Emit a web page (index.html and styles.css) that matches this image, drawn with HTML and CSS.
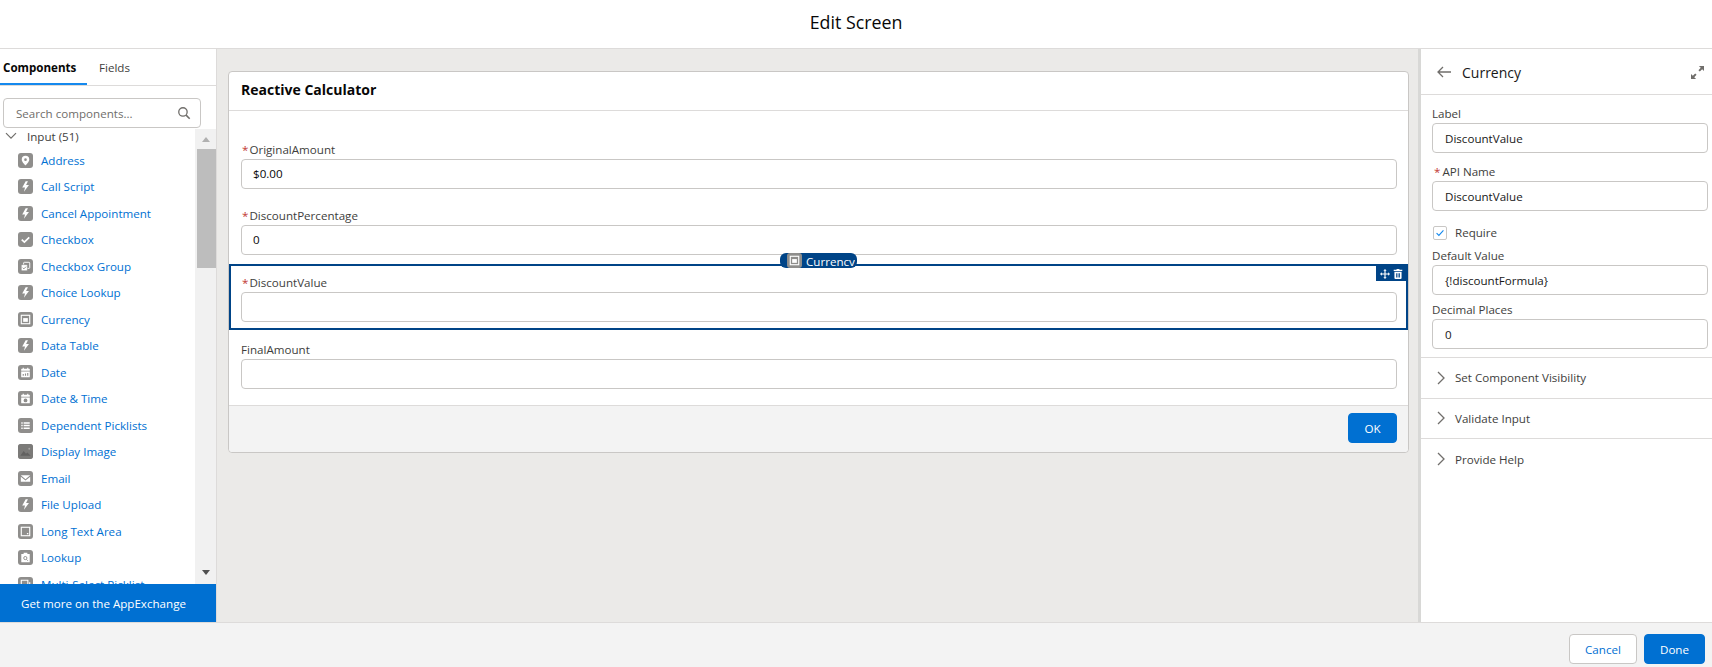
FILE: index.html
```html
<!DOCTYPE html>
<html lang="en">
<head>
<meta charset="utf-8">
<title>Edit Screen</title>
<link rel="stylesheet" href="styles.css">
</head>
<body>
<svg class="defs" width="0" height="0" aria-hidden="true">
  <symbol id="i-pin" viewBox="0 0 16 16"><path fill="#fff" fill-rule="evenodd" d="M8 3a4 4 0 0 0-4 4c0 2.600 3 5.400 4 6.200 1-.8 4-3.600 4-6.200a4 4 0 0 0-4-4zm0 2.700a1.400 1.400 0 1 1 0 2.800 1.400 1.400 0 0 1 0-2.800z"/></symbol>
  <symbol id="i-bolt" viewBox="0 0 16 16"><path fill="#fff" d="M8.200 2.500 4.500 9h3L6.300 13.700 11.700 6.500H8.600L10.600 2.500z"/></symbol>
  <symbol id="i-check" viewBox="0 0 16 16"><path fill="none" stroke="#fff" stroke-width="1.800" d="M4 8.200l2.800 2.600L12 5.700"/></symbol>
  <symbol id="i-group" viewBox="0 0 16 16"><rect x="6" y="3.500" width="6.500" height="6.500" rx=".8" fill="none" stroke="#fff"/><rect x="3.500" y="6" width="6.500" height="6.500" rx=".8" fill="#fff" stroke="#8f8e8c" stroke-width=".6"/><path fill="none" stroke="#8f8e8c" d="M5 9.300l1.300 1.200 2.200-2.300"/></symbol>
  <symbol id="i-cur" viewBox="0 0 16 16"><rect x="3.500" y="3.500" width="9" height="9" fill="none" stroke="#fff" stroke-width="1.200"/><rect x="5.500" y="6.500" width="5" height="4" fill="#fff"/></symbol>
  <symbol id="i-date" viewBox="0 0 16 16"><path fill="#fff" d="M4 4h8a.6.6 0 0 1 .6.600V6H3.400V4.600A.6.6 0 0 1 4 4zM5 3h1.200v1.500H5zM9.800 3H11v1.500H9.800zM3.400 6.800h9.200v5.600a.6.6 0 0 1-.6.600H4a.6.6 0 0 1-.6-.6z"/><path fill="#8f8e8c" d="M5 9.500h1.200v2H5zM7.400 9h1.200v2.500H7.400zM9.800 8.500H11v3H9.800z"/></symbol>
  <symbol id="i-time" viewBox="0 0 16 16"><path fill="#fff" d="M4 4h8a.6.6 0 0 1 .6.600V6H3.400V4.600A.6.6 0 0 1 4 4zM5 3h1.200v1.500H5zM9.800 3H11v1.500H9.800zM3.400 6.800h9.200v5.600a.6.6 0 0 1-.6.600H4a.6.6 0 0 1-.6-.6z"/><circle cx="8" cy="10" r="2" fill="#8f8e8c"/></symbol>
  <symbol id="i-list" viewBox="0 0 16 16"><path fill="#fff" d="M3.500 4.500h1.500V6H3.500zM6 4.500h6.500V6H6zM3.500 7.300h1.500v1.500H3.500zM6 7.300h6.500v1.500H6zM3.500 10.100h1.500v1.500H3.500zM6 10.100h6.500v1.500H6z"/></symbol>
  <symbol id="i-img" viewBox="0 0 16 16"><rect width="16" height="16" fill="#7b7a78"/><path fill="#626160" d="M2.500 12.500l3.500-5 2.500 3 1.500-1.500 3.500 3.500z"/><circle cx="12" cy="5" r="1" fill="#a8a7a5"/></symbol>
  <symbol id="i-mail" viewBox="0 0 16 16"><path fill="#fff" d="M3 4.500h10L8 8.700zM3 6l5 4.200L13 6v5.500H3z"/></symbol>
  <symbol id="i-long" viewBox="0 0 16 16"><rect x="3.500" y="3.500" width="9" height="9" fill="none" stroke="#fff" stroke-width="1.200"/><path fill="#fff" d="M9.500 9.500h1.500v1.500H9.500z"/></symbol>
  <symbol id="i-look" viewBox="0 0 16 16"><path fill="#fff" d="M6 2.800h4v1.400h2.500V13h-9V4.200H6z"/><circle cx="7.800" cy="8.600" r="1.700" fill="none" stroke="#8f8e8c"/><path stroke="#8f8e8c" d="M9 10l1.500 1.500"/></symbol>
  <symbol id="i-drop" viewBox="0 0 16 16"><path fill="none" stroke="#fff" stroke-width="1.200" d="M3.500 3.500h7v7h-7zM5.500 12.500h7v-7"/></symbol>
</svg>

<div class="app">
  <header class="top">Edit Screen</header>
  <div class="main">
    <aside class="left">
      <nav class="tabs">
        <span class="tab tab-on">Components</span>
        <span class="tab">Fields</span>
      </nav>
      <div class="search">
        <span class="search-text">Search components...</span>
        <svg class="search-ico" viewBox="0 0 16 16"><circle cx="6.800" cy="6.800" r="4.800" fill="none" stroke="#706e6b" stroke-width="1.500"/><path d="M10.400 10.400L14.500 14.500" stroke="#706e6b" stroke-width="1.800"/></svg>
      </div>
      <div class="lib">
        <div class="lib-list">
          <div class="group-head">
            <svg class="group-chev" viewBox="0 0 12 8"><path d="M1 1.200l5 5 5-5" fill="none" stroke="#706e6b" stroke-width="1.200"/></svg>
            <span>Input (51)</span>
          </div>
          <div class="item"><svg class="ico"><use href="#i-pin"/></svg><a>Address</a></div>
          <div class="item"><svg class="ico"><use href="#i-bolt"/></svg><a>Call Script</a></div>
          <div class="item"><svg class="ico"><use href="#i-bolt"/></svg><a>Cancel Appointment</a></div>
          <div class="item"><svg class="ico"><use href="#i-check"/></svg><a>Checkbox</a></div>
          <div class="item"><svg class="ico"><use href="#i-group"/></svg><a>Checkbox Group</a></div>
          <div class="item"><svg class="ico"><use href="#i-bolt"/></svg><a>Choice Lookup</a></div>
          <div class="item"><svg class="ico"><use href="#i-cur"/></svg><a>Currency</a></div>
          <div class="item"><svg class="ico"><use href="#i-bolt"/></svg><a>Data Table</a></div>
          <div class="item"><svg class="ico"><use href="#i-date"/></svg><a>Date</a></div>
          <div class="item"><svg class="ico"><use href="#i-time"/></svg><a>Date &amp; Time</a></div>
          <div class="item"><svg class="ico"><use href="#i-list"/></svg><a>Dependent Picklists</a></div>
          <div class="item"><svg class="ico"><use href="#i-img"/></svg><a>Display Image</a></div>
          <div class="item"><svg class="ico"><use href="#i-mail"/></svg><a>Email</a></div>
          <div class="item"><svg class="ico"><use href="#i-bolt"/></svg><a>File Upload</a></div>
          <div class="item"><svg class="ico"><use href="#i-long"/></svg><a>Long Text Area</a></div>
          <div class="item"><svg class="ico"><use href="#i-look"/></svg><a>Lookup</a></div>
          <div class="item"><svg class="ico"><use href="#i-drop"/></svg><a>Multi-Select Picklist</a></div>
        </div>
        <div class="scroll">
          <div class="arrow-up"></div>
          <div class="thumb"></div>
          <div class="arrow-down"></div>
        </div>
      </div>
      <div class="exchange">Get more on the AppExchange</div>
    </aside>

    <section class="canvas">
      <div class="card">
        <div class="card-head">Reactive Calculator</div>
        <div class="card-body">
          <div class="field">
            <div class="label"><b>*</b>OriginalAmount</div>
            <div class="input">$0.00</div>
          </div>
          <div class="field">
            <div class="label"><b>*</b>DiscountPercentage</div>
            <div class="input">0</div>
          </div>
          <div class="field field-sel">
            <div class="tag">
              <span class="tag-ico"><svg viewBox="0 0 16 16"><use href="#i-cur"/></svg></span>
              <span class="tag-text">Currency</span>
            </div>
            <div class="actions">
              <svg viewBox="0 0 14 14"><path fill="#fff" d="M7 0l2.300 2.600H7.800v3.600h3.600V4.700L14 7l-2.600 2.300V7.800H7.800v3.600h1.500L7 14l-2.300-2.600h1.500V7.800H2.600v1.500L0 7l2.600-2.300v1.500h3.600V2.600H4.700z"/></svg>
              <svg viewBox="0 0 14 14"><path fill="#fff" d="M5 0h4v1.200h4v1.600H1V1.200h4zM2 4h10v8.500a1.500 1.500 0 0 1-1.500 1.500h-7A1.500 1.500 0 0 1 2 12.500zm2.500 2v6h1.200V6zm2 0v6h1.200V6zm2 0v6h1.200V6z"/></svg>
            </div>
            <div class="label"><b>*</b>DiscountValue</div>
            <div class="input"></div>
          </div>
          <div class="field field-last">
            <div class="label">FinalAmount</div>
            <div class="input"></div>
          </div>
        </div>
        <div class="card-foot"><button class="btn btn-brand btn-ok">OK</button></div>
      </div>
    </section>

    <aside class="right">
      <div class="right-head">
        <svg class="back" viewBox="0 0 14 12"><path d="M6 1L1 6l5 5M1 6h13" fill="none" stroke="#706e6b" stroke-width="1.300"/></svg>
        <span class="right-title">Currency</span>
        <svg class="expand" viewBox="0 0 14 14"><path fill="#706e6b" d="M8.500 0H14v5.500l-2-2-2.500 2.500-1.500-1.500L10.500 2zM0 8.500l2 2L4.500 8 6 9.500 3.500 12l2 2H0z"/></svg>
      </div>
      <div class="props">
        <div class="plabel">Label</div>
        <div class="pinput">DiscountValue</div>
        <div class="plabel plabel-gap"><b>*</b>API Name</div>
        <div class="pinput">DiscountValue</div>
        <label class="check-row">
          <span class="checkbox"><svg viewBox="0 0 14 14"><path d="M3 7.200l2.700 2.600L11 4" fill="none" stroke="#1589ee" stroke-width="1.300"/></svg></span>
          <span>Require</span>
        </label>
        <div class="plabel plabel-tight">Default Value</div>
        <div class="pinput">{!discountFormula}</div>
        <div class="plabel plabel-tight2">Decimal Places</div>
        <div class="pinput">0</div>
      </div>
      <div class="sect"><svg class="chev" viewBox="0 0 8 14"><path d="M1 1l6 6-6 6" fill="none" stroke="#706e6b" stroke-width="1.300"/></svg>Set Component Visibility</div>
      <div class="sect"><svg class="chev" viewBox="0 0 8 14"><path d="M1 1l6 6-6 6" fill="none" stroke="#706e6b" stroke-width="1.300"/></svg>Validate Input</div>
      <div class="sect"><svg class="chev" viewBox="0 0 8 14"><path d="M1 1l6 6-6 6" fill="none" stroke="#706e6b" stroke-width="1.300"/></svg>Provide Help</div>
    </aside>
  </div>
  <footer class="foot">
    <button class="btn btn-neutral">Cancel</button>
    <button class="btn btn-brand btn-done">Done</button>
  </footer>
</div>
</body>
</html>
```

FILE: styles.css
```css
* { box-sizing: border-box; }
html, body { margin: 0; padding: 0; }
body {
  font-family: "Open Sans", "Noto Sans", sans-serif;
  font-size: 11.600px;
  color: #080707;
  background: #fff;
}
.defs { position: absolute; }
.app { width: 1712px; height: 667px; display: flex; flex-direction: column; overflow: hidden; }

.top {
  height: 49px;
  flex: none;
  border-bottom: 1px solid #dddbda;
  display: flex;
  align-items: center;
  justify-content: center;
  padding-bottom: 5px;
  font-size: 17.800px;
  color: #080707;
}

.main { flex: 1; display: flex; min-height: 0; }

/* left column */
.left { width: 217px; flex: none; display: flex; flex-direction: column; border-right: 1px solid #dddbda; }
.tabs { height: 37px; flex: none; display: flex; border-bottom: 1px solid #dddbda; }
.tab { padding: 0 12px; line-height: 37px; color: #3e3e3c; }
.tab-on { width: 87px; padding: 0 0 0 3px; font-weight: 700; color: #080707; border-bottom: 2px solid #1589ee; height: 36px; }
.search {
  flex: none;
  margin: 12px 0 1px 3px;
  width: 198px;
  height: 30px;
  border: 1px solid #c9c7c5;
  border-radius: 4px;
  display: flex;
  align-items: center;
  justify-content: space-between;
  padding: 0 9px 0 12px;
  color: #706e6b;
}
.search-ico { width: 14px; height: 14px; }
.lib { flex: 1; min-height: 0; display: flex; }
.lib-list { width: 195px; flex: none; overflow: hidden; }
.group-head { height: 21px; margin-top: -3px; padding: 0 0 1px 5px; display: flex; align-items: center; color: #3e3e3c; }
.group-chev { width: 12px; height: 8px; margin-right: 10px; }
.item { height: 26.500px; display: flex; align-items: center; padding-left: 18px; }
.item a { color: #0070d2; margin-left: 8px; }
.ico { width: 15px; height: 15px; flex: none; background: #8f8e8c; border-radius: 3px; }
.scroll { width: 21px; flex: none; background: #f1f1f1; display: flex; flex-direction: column; align-items: flex-end; }
.arrow-up { width: 0; height: 0; margin: 8px 6px 7px 0; border: 4.500px solid transparent; border-top: 0; border-bottom: 5px solid #b0b0b0; }
.thumb { width: 19px; height: 119px; background: #bdbdbd; }
.arrow-down { width: 0; height: 0; margin: auto 6px 9px 0; border: 4.500px solid transparent; border-bottom: 0; border-top: 5px solid #505050; }
.exchange { height: 38px; flex: none; background: #0070d2; color: #fff; display: flex; align-items: center; padding-left: 21px; }

/* canvas */
.canvas { flex: 1; min-width: 0; background: #ebeae8; padding: 22px 0 0 11px; }
.card { background: #fff; border: 1px solid #c9c7c5; border-radius: 4px; width: 1181px; }
.card-head { height: 39px; border-bottom: 1px solid #dddbda; font-size: 14px; font-weight: 700; padding-left: 12px; line-height: 35px; }
.card-body { padding-top: 21px; padding-bottom: 7px; }
.field { padding: 11px 11px 9px 12px; position: relative; }
.field-sel { padding: 10px 9px 6px 10px; border: 2px solid #004487; }
.field-last { padding-top: 13px; }
.label { height: 16px; line-height: 14px; color: #3e3e3c; }
.label b { color: #c23934; font-weight: 400; margin: 0 1px 0 1px; }
.input { height: 30px; border: 1px solid #c9c7c5; border-radius: 4px; padding: 0 11px; line-height: 28px; color: #080707; background: #fff; }
.tag {
  position: absolute;
  top: -13px;
  left: 549px;
  width: 77px;
  height: 15px;
  background: #004487;
  border-radius: 6px;
  color: #fff;
  display: flex;
  gap: 4px;
  overflow: hidden;
  padding-left: 7px;
  line-height: 18px;
}
.tag-ico { width: 15px; height: 15px; background: #8f8e8c; border-radius: 3px; flex: none; }
.tag-ico svg { display: block; width: 15px; height: 15px; }
.tag-text { display: block; height: 13px; overflow: hidden; }
.actions { position: absolute; top: 0; right: 0; width: 30px; height: 15px; background: #004487; display: flex; align-items: center; justify-content: center; gap: 3px; }
.actions svg { width: 10px; height: 10px; }
.card-foot { height: 47px; background: #f3f3f3; border-top: 1px solid #dddbda; border-radius: 0 0 4px 4px; display: flex; justify-content: flex-end; padding: 7px 11px 0 0; }

.btn { font-family: inherit; font-size: 11.600px; border-radius: 4px; height: 30px; padding: 0; }
.btn-brand { background: #0070d2; color: #fff; border: 1px solid #0070d2; }
.btn-neutral { background: #fff; color: #0070d2; border: 1px solid #c9c7c5; width: 68px; }
.btn-ok { width: 49px; }
.btn-done { width: 61px; }

/* right column */
.right { width: 294px; flex: none; background: #fff; border-left: 3px solid #d8d8d6; }
.right-head { height: 46px; display: flex; align-items: center; border-bottom: 1px solid #dddbda; padding: 1px 8px 0 16px; }
.back { width: 14px; height: 12px; margin-right: 11px; }
.right-title { font-size: 14px; color: #181818; flex: 1; }
.expand { width: 13px; height: 13px; }
.props { padding: 11px 4px 8px 11px; border-bottom: 1px solid #dddbda; height: 263px; }
.plabel { height: 15px; line-height: 15px; color: #3e3e3c; margin-bottom: 2px; }
.plabel b { color: #c23934; font-weight: 400; margin: 0 2px 0 2px; }
.plabel-gap { margin-top: 11px; }
.plabel-tight { margin-top: 8px; }
.plabel-tight2 { margin-top: 7px; }
.pinput { height: 30px; border: 1px solid #c9c7c5; border-radius: 4px; padding: 0 12px; line-height: 30px; color: #181818; }
.check-row { display: flex; align-items: center; gap: 8px; height: 15px; margin-top: 14px; color: #3e3e3c; }
.checkbox { width: 14px; height: 14px; margin-left: 1px; border: 1px solid #c9c7c5; border-radius: 2px; flex: none; display: block; }
.checkbox svg { display: block; width: 12px; height: 12px; }
.sect { height: 40.500px; border-bottom: 1px solid #dddbda; display: flex; align-items: center; padding-left: 16px; color: #3e3e3c; }
.sect:last-child { border-bottom: 0; }
.chev { width: 8px; height: 14px; margin-right: 10px; }

/* footer */
.foot { height: 45px; flex: none; background: #f3f3f3; border-top: 1px solid #dddbda; display: flex; justify-content: flex-end; align-items: flex-start; gap: 7px; padding: 11px 7px 0 0; }
```
